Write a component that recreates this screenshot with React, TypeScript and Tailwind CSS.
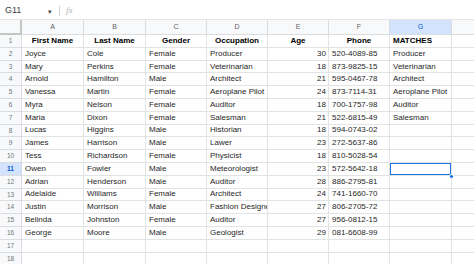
import React from "react";

const cols = [
  { l: "A", w: 62 },
  { l: "B", w: 62 },
  { l: "C", w: 61 },
  { l: "D", w: 61 },
  { l: "E", w: 61 },
  { l: "F", w: 61 },
  { l: "G", w: 62 },
  { l: "", w: 30 },
];

const data: string[][] = [
  ["First Name", "Last Name", "Gender", "Occupation", "Age", "Phone", "MATCHES"],
  ["Joyce", "Cole", "Female", "Producer", "30", "520-4089-85", "Producer"],
  ["Mary", "Perkins", "Female", "Veterinarian", "18", "873-9825-15", "Veterinarian"],
  ["Arnold", "Hamilton", "Male", "Architect", "21", "595-0467-78", "Architect"],
  ["Vanessa", "Martin", "Female", "Aeroplane Pilot", "24", "873-7114-31", "Aeroplane Pilot"],
  ["Myra", "Nelson", "Female", "Auditor", "18", "700-1757-98", "Auditor"],
  ["Maria", "Dixon", "Female", "Salesman", "21", "522-6815-49", "Salesman"],
  ["Lucas", "Higgins", "Male", "Historian", "18", "594-0743-02", ""],
  ["James", "Harrison", "Male", "Lawer", "23", "272-5637-86", ""],
  ["Tess", "Richardson", "Female", "Physicist", "18", "810-5028-54", ""],
  ["Owen", "Fowler", "Male", "Meteorologist", "23", "572-5642-18", ""],
  ["Adrian", "Henderson", "Male", "Auditor", "28", "886-2795-81", ""],
  ["Adelaide", "Williams", "Female", "Architect", "24", "741-1660-70", ""],
  ["Justin", "Morrison", "Male", "Fashion Designer", "27", "806-2705-72", ""],
  ["Belinda", "Johnston", "Female", "Auditor", "27", "956-0812-15", ""],
  ["George", "Moore", "Male", "Geologist", "29", "081-6608-99", ""],
  ["", "", "", "", "", "", ""],
  ["", "", "", "", "", "", ""],
];

export default function App() {
  return (
    <div
      className="w-[474px] h-[264px] overflow-hidden bg-white text-[#202124]"
      style={{ fontFamily: '"Liberation Sans", Arial, sans-serif' }}
    >
      {/* Formula bar */}
      <div className="h-[20px] flex items-center pt-[3px] border-b border-[#e3e3e3]">
        <div className="w-[48px] pl-[5px] text-[9px] text-[#3c4043]">G11</div>
        <div className="w-[8px] text-[7px] text-[#444] leading-none">▾</div>
        <div className="w-px h-[10px] bg-[#d0d0d0] ml-[3px]" />
        <div
          className="ml-[6px] text-[9px] italic text-[#b0b0b0]"
          style={{ fontFamily: '"Liberation Serif", serif' }}
        >
          fx
        </div>
      </div>
      {/* Column header */}
      <div className="flex h-[15px]">
        <div className="w-[22px] shrink-0 bg-[#f8f9fa] border-r-[2px] border-b-[2px] border-[#c4c7c5]" />
        {cols.map((c, i) => (
          <div
            key={i}
            style={{ width: c.w }}
            className={
              "shrink-0 flex items-center justify-center text-[7px] border-r border-b border-[#dadce0] " +
              (c.l === "G" ? "bg-[#d3e3fd] text-[#0b57d0]" : "bg-[#f8f9fa] text-[#5f6368]")
            }
          >
            {c.l}
          </div>
        ))}
      </div>
      {/* Rows */}
      {data.map((row, r) => {
        const sel = r === 10;
        return (
          <div key={r} className="flex h-[12.8px]">
            <div
              className={
                "w-[22px] shrink-0 flex items-center justify-center text-[6.5px] border-r border-b border-[#dadce0] " +
                (sel ? "bg-[#d3e3fd] text-[#0b57d0] font-bold" : "bg-[#f8f9fa] text-[#70757a]")
              }
            >
              {r + 1}
            </div>
            {cols.map((c, ci) => {
              const v = ci < 7 ? row[ci] : "";
              const isHeader = r === 0;
              const right = !isHeader && ci === 4;
              const center = isHeader && ci < 6;
              return (
                <div
                  key={ci}
                  style={{ width: c.w }}
                  className={
                    "relative shrink-0 flex items-center overflow-hidden whitespace-nowrap text-[8px] border-r border-b border-[#e2e3e3] " +
                    (center ? "justify-center " : right ? "justify-end pr-[2px] " : "pl-[3px] ") +
                    (isHeader ? "font-bold text-black" : "text-[#1f1f1f]")
                  }
                >
                  {v}
                  {sel && ci === 6 && (
                    <div className="absolute left-0 top-0 w-full h-full border-[1.5px] border-[#1a73e8]" />
                  )}
                </div>
              );
            })}
          </div>
        );
      })}
      <div className="relative">
        <div className="absolute left-[449px] top-[-91px] w-[5px] h-[5px] rounded-full bg-[#1a73e8] border border-white" />
      </div>
    </div>
  );
}
